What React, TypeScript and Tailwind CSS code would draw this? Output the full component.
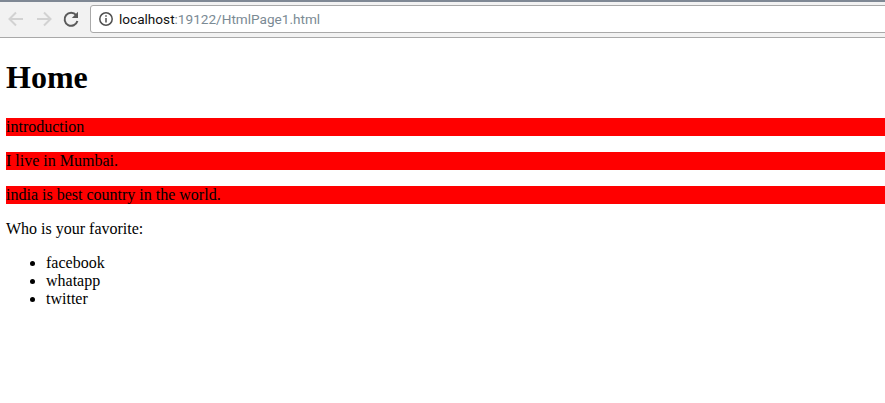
import React from "react";

const serif = "font-['Liberation_Serif',serif]";

function Toolbar() {
  return (
    <div className="h-[38px] w-[885px] overflow-hidden bg-[#f2f2f2] border-t-[2px] border-t-[#7f8894] border-b-[1px] border-b-[#a9a9a9] flex items-center pb-[1px]">
      <svg width="18" height="18" viewBox="0 0 18 18" className="ml-[7px] shrink-0" fill="none" stroke="#d2d2d2" strokeWidth="2">
        <path d="M16 9H3M9 2.5L2.5 9L9 15.5" />
      </svg>
      <svg width="18" height="18" viewBox="0 0 18 18" className="ml-[10px] shrink-0" fill="none" stroke="#d2d2d2" strokeWidth="2">
        <path d="M2 9H15M9 2.5L15.5 9L9 15.5" />
      </svg>
      <svg width="18" height="18" viewBox="0 0 18 18" className="ml-[9px] shrink-0" fill="none">
        <path d="M14.2 5.2A6.5 6.5 0 1 0 15.4 11" stroke="#5a5a5a" strokeWidth="2" />
        <path d="M16 1.8V8H9.8Z" fill="#5a5a5a" />
      </svg>
      <div className="ml-[10px] mr-[-6px] flex-1 h-[28px] bg-white border border-[#a9a9a9] rounded-[3px] flex items-center font-['Roboto',sans-serif] text-[13.6px]">
        <svg width="16" height="16" viewBox="0 0 16 16" className="ml-[7px] shrink-0" fill="none" stroke="#505050" strokeWidth="1.5">
          <circle cx="8" cy="8" r="6.2" />
          <path d="M8 7v4.5M8 4.2v1.6" />
        </svg>
        <span className="ml-[5px] text-[#111]">localhost</span>
        <span className="text-[#7b8a94]">:19122/HtmlPage1.html</span>
      </div>
    </div>
  );
}

export default function App() {
  return (
    <div className="h-[403px] w-[885px] overflow-hidden bg-white text-black">
      <Toolbar />
      <div className={`${serif} pl-[6px] text-[16px] leading-[18px]`}>
        <h1 className="text-[32px] font-bold leading-[37px] pt-[21px] mb-[22px]">Home</h1>
        <p className="bg-[#ff0000] mb-[16px]">introduction</p>
        <p className="bg-[#ff0000] mb-[16px]">I live in Mumbai.</p>
        <p className="bg-[#ff0000] mb-[16px]">india is best country in the world.</p>
        <p className="mb-[16px]">Who is your favorite:</p>
        <ul className="list-disc pl-[40px]">
          <li>facebook</li>
          <li>whatapp</li>
          <li>twitter</li>
        </ul>
      </div>
    </div>
  );
}
